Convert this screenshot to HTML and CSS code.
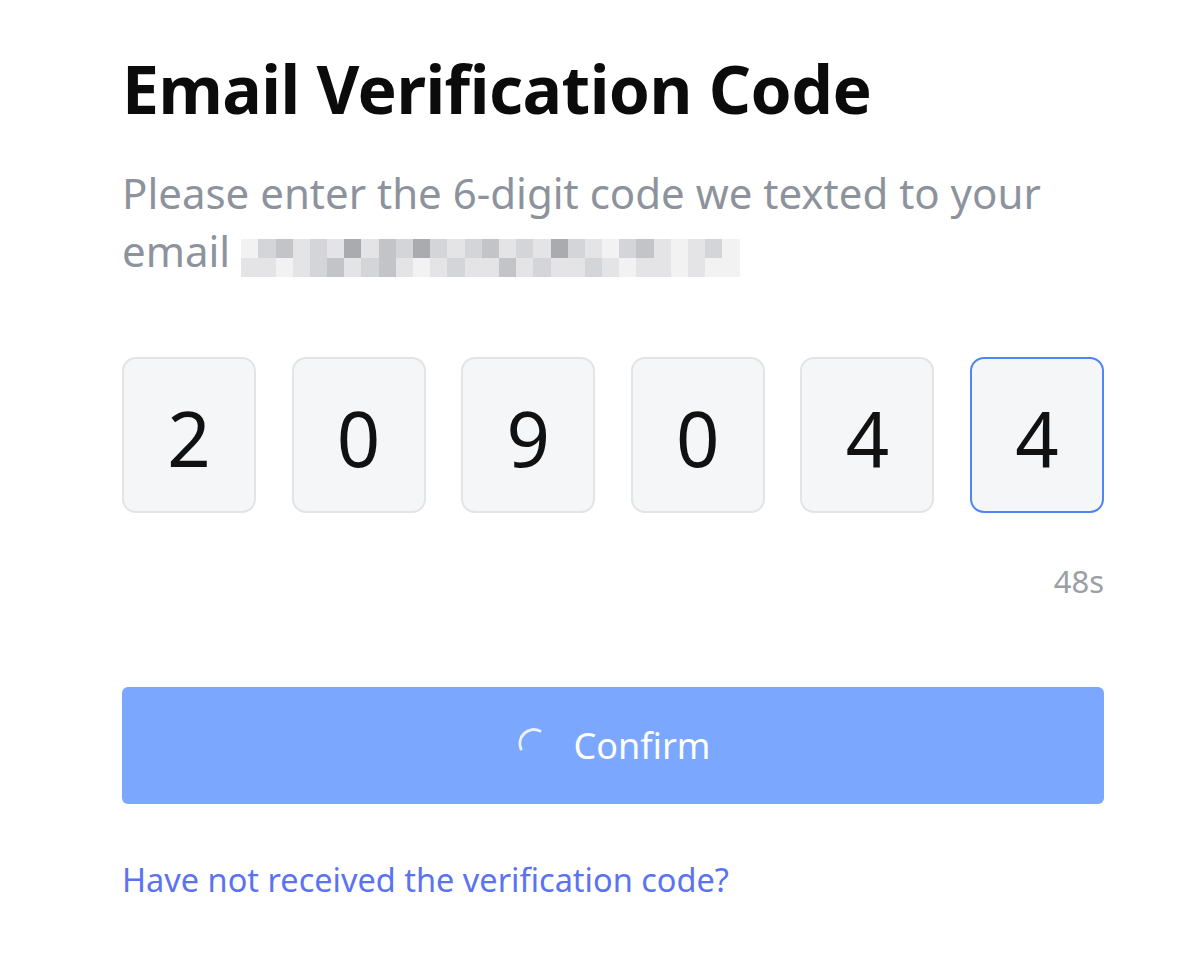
FILE: index.html
```html
<!DOCTYPE html>
<html lang="en">
<head>
<meta charset="utf-8">
<title>Email Verification Code</title>
<link rel="stylesheet" href="styles.css">
</head>
<body>
<main class="panel">
  <h1 class="title">Email Verification Code</h1>
  <p class="subtitle">Please enter the 6-digit code we texted to your email <span class="mosaic" aria-label="hidden email"><span class="row"><i class="c0"></i><i class="c2"></i><i class="c3"></i><i class="c1"></i><i class="c2"></i><i class="c1"></i><i class="c4"></i><i class="c1"></i><i class="c3"></i><i class="c2"></i><i class="c4"></i><i class="c2"></i><i class="c1"></i><i class="c2"></i><i class="c3"></i><i class="c1"></i><i class="c2"></i><i class="c1"></i><i class="c4"></i><i class="c2"></i><i class="c1"></i><i class="c0"></i><i class="c2"></i><i class="c3"></i><i class="c1"></i><i class="c0"></i><i class="c1"></i><i class="c2"></i><i class="c0"></i></span><span class="row"><i class="c1"></i><i class="c1"></i><i class="c0"></i><i class="c1"></i><i class="c2"></i><i class="c3"></i><i class="c1"></i><i class="c2"></i><i class="c3"></i><i class="c1"></i><i class="c0"></i><i class="c1"></i><i class="c2"></i><i class="c1"></i><i class="c1"></i><i class="c3"></i><i class="c1"></i><i class="c2"></i><i class="c1"></i><i class="c1"></i><i class="c2"></i><i class="c1"></i><i class="c0"></i><i class="c1"></i><i class="c1"></i><i class="c0"></i><i class="c1"></i><i class="c0"></i><i class="c0"></i></span></span></p>

  <div class="code">
    <div class="digit">2</div>
    <div class="digit">0</div>
    <div class="digit">9</div>
    <div class="digit">0</div>
    <div class="digit">4</div>
    <div class="digit active">4</div>
  </div>
  <div class="timer">48s</div>

  <button class="confirm" type="button">
    <svg class="spinner" width="36" height="36" viewBox="0 0 36 36" aria-hidden="true">
      <path d="M5 24 A14 14 0 0 1 24 6" fill="none" stroke="rgba(255,255,255,0.85)" stroke-width="3" stroke-linecap="round"/>
    </svg>
    <span>Confirm</span>
  </button>

  <a class="resend" href="#">Have not received the verification code?</a>
</main>
</body>
</html>
```

FILE: styles.css
```css
* { box-sizing: border-box; }
html, body { margin: 0; padding: 0; background: #ffffff; }
body {
  font-family: "Noto Sans", "Open Sans", "Liberation Sans", sans-serif;
  color: #111111;
}
.panel {
  width: 982px;
  margin-left: 122px;
  padding-top: 46px;
  display: flex;
  flex-direction: column;
}
.title {
  margin: 0;
  font-size: 66px;
  font-weight: 700;
  line-height: 84px;
  color: #0b0b0b;
  letter-spacing: -0.5px;
}
.subtitle {
  margin: 34px 0 0;
  font-size: 42px;
  line-height: 58px;
  color: #8d939d;
  width: 982px;
}
.mosaic {
  display: inline-flex;
  flex-direction: column;
  vertical-align: 9px;
}
.mosaic .row { display: flex; }
.mosaic i { display: block; width: 17.2px; height: 19px; }
.c0 { background: #f2f2f3; }
.c1 { background: #e4e4e6; }
.c2 { background: #d4d5d8; }
.c3 { background: #c3c4c8; }
.c4 { background: #a9abaf; }

.code {
  margin-top: 77px;
  display: flex;
  justify-content: space-between;
}
.digit {
  width: 134px;
  height: 156px;
  border: 2px solid #e3e4e6;
  border-radius: 14px;
  background: #f5f6f8;
  display: flex;
  align-items: center;
  justify-content: center;
  font-size: 76px;
  color: #111;
  line-height: 1;
  padding-top: 6px;
}
.digit.active { border-color: #4f86f7; }
.timer {
  align-self: flex-end;
  margin-top: 48px;
  font-size: 31px;
  color: #9a9ea5;
  line-height: 40px;
}
.confirm {
  margin-top: 86px;
  height: 117px;
  width: 100%;
  border: none;
  border-radius: 6px;
  background: #7ba7fe;
  color: #ffffff;
  font-family: inherit;
  font-size: 36px;
  display: flex;
  align-items: center;
  justify-content: center;
  gap: 22px;
  padding: 0;
}
.spinner { margin-top: -6px; }
.resend {
  margin-top: 56px;
  font-size: 32.5px;
  line-height: 40px;
  color: #5b73f2;
  text-decoration: none;
  align-self: flex-start;
}
```
